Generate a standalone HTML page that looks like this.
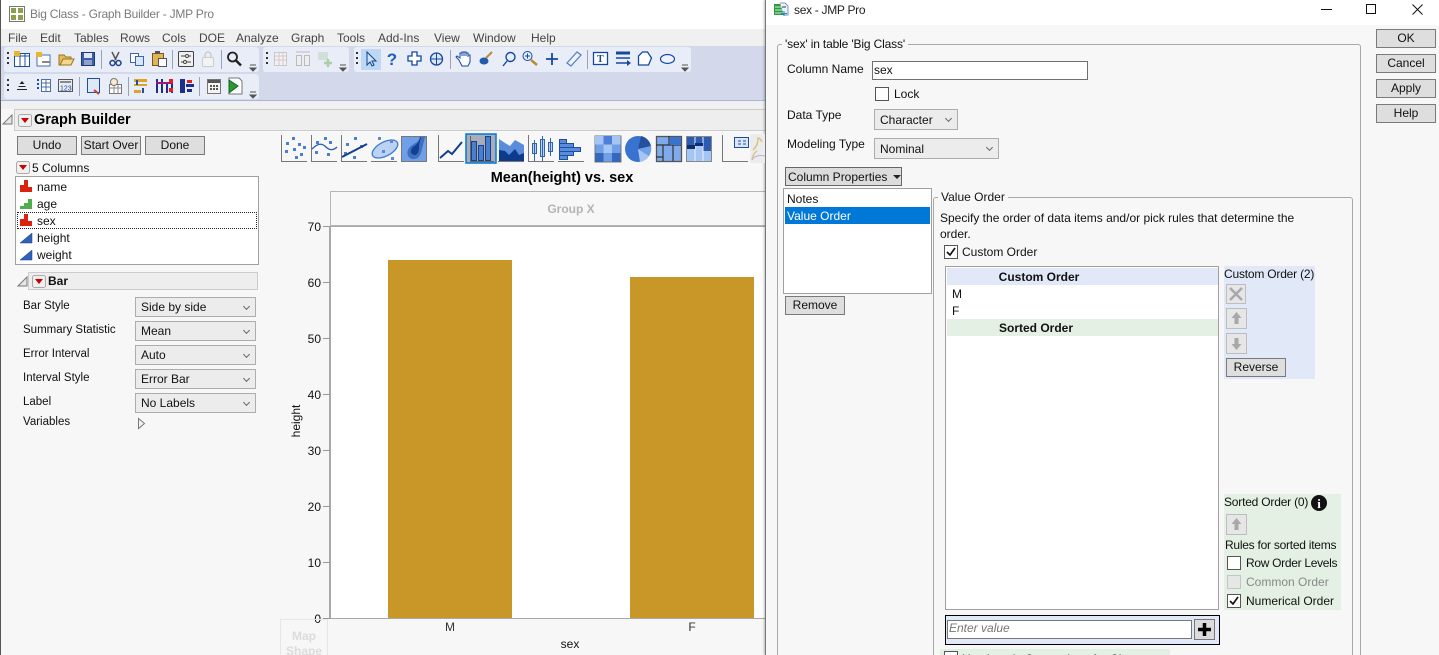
<!DOCTYPE html>
<html><head><meta charset="utf-8"><title>Big Class - Graph Builder - JMP Pro</title>
<style>
html,body{margin:0;padding:0;width:1439px;height:655px;overflow:hidden;background:#f7f7f7}
body{position:relative;font:12px "Liberation Sans",sans-serif;color:#111}
div{position:absolute;box-sizing:border-box}
.t{white-space:nowrap;line-height:16px;height:16px;transform:translateY(-8px)}
.c{transform:translate(-50%,-8px)}
.r{transform:translate(-100%,-8px)}
.b{font-weight:bold}
.btn{background:#dedede;border:1px solid #7a7a7a;text-align:center;line-height:17px;white-space:nowrap}
.dd{background:#ececec;border:1px solid #adadad;padding-left:5px;line-height:19px;white-space:nowrap}
.dd:after{content:"";position:absolute;right:6px;top:6px;width:4px;height:4px;border-right:1px solid #666;border-bottom:1px solid #666;transform:rotate(45deg)}
.cb{width:14px;height:14px;background:#fff;border:1px solid #555}
.ib{background:#e6e6e6;border:1px solid #bdbdbd}
svg{position:absolute;left:0;top:0}
</style></head><body>
<!-- main window -->
<div style="left:0;top:0;width:765px;height:29px;background:#fff"></div>
<div style="left:0;top:29px;width:765px;height:17px;background:#f0f0f0"></div>
<div style="left:0;top:46px;width:765px;height:55px;background:#d3d9eb;border-bottom:1px solid #a9b4d8"></div>
<div style="left:0;top:101px;width:765px;height:8px;background:#f0f0f0"></div>
<div style="left:0;top:0;width:1px;height:655px;background:#555"></div>
<div class="t" style="left:30px;top:14px;color:#7a7a7a;letter-spacing:-.23px">Big Class - Graph Builder - JMP Pro</div>
<div class="t" style="left:8px;top:38px;color:#444">File</div>
<div class="t" style="left:40px;top:38px;color:#444">Edit</div>
<div class="t" style="left:74px;top:38px;color:#444">Tables</div>
<div class="t" style="left:120px;top:38px;color:#444">Rows</div>
<div class="t" style="left:162px;top:38px;color:#444">Cols</div>
<div class="t" style="left:199px;top:38px;color:#444">DOE</div>
<div class="t" style="left:236px;top:38px;color:#444">Analyze</div>
<div class="t" style="left:291px;top:38px;color:#444">Graph</div>
<div class="t" style="left:337px;top:38px;color:#444">Tools</div>
<div class="t" style="left:378px;top:38px;color:#444">Add-Ins</div>
<div class="t" style="left:434px;top:38px;color:#444">View</div>
<div class="t" style="left:473px;top:38px;color:#444">Window</div>
<div class="t" style="left:531px;top:38px;color:#444">Help</div>
<div style="left:4px;top:47px;width:255px;height:25px;background:#e9edf8;border-radius:3px"></div>
<div style="left:263px;top:47px;width:86px;height:25px;background:#e9edf8;border-radius:3px"></div>
<div style="left:354px;top:47px;width:337px;height:25px;background:#e9edf8;border-radius:3px"></div>
<div style="left:4px;top:74px;width:255px;height:25px;background:#e9edf8;border-radius:3px"></div>
<div style="left:361px;top:49px;width:20px;height:21px;background:#bcd8f5"></div>

<!-- Graph builder panel -->
<div style="left:14px;top:109px;width:752px;height:22px;background:#eee;border:1px solid #ccc"></div>
<div class="t b" style="left:34px;top:120px;font-size:14.5px;color:#000">Graph Builder</div>
<div class="btn" style="left:17px;top:136px;width:60px;height:19px">Undo</div>
<div class="btn" style="left:81px;top:136px;width:60px;height:19px">Start Over</div>
<div class="btn" style="left:145px;top:136px;width:60px;height:19px">Done</div>
<div class="t" style="left:32px;top:168px">5 Columns</div>
<div style="left:15px;top:176px;width:244px;height:89px;background:#fff;border:1px solid #a0a0a0"></div>
<div style="left:17px;top:212px;width:240px;height:17px;border:1px dotted #222"></div>
<div class="t" style="left:37px;top:187px">name</div>
<div class="t" style="left:37px;top:204px">age</div>
<div class="t" style="left:37px;top:221px">sex</div>
<div class="t" style="left:37px;top:238px">height</div>
<div class="t" style="left:37px;top:255px">weight</div>

<div style="left:28px;top:272px;width:230px;height:18px;background:#eee;border:1px solid #ccc"></div>
<div class="t b" style="left:48px;top:281px">Bar</div>
<div class="t" style="left:23px;top:306px;font-size:11.5px">Bar Style</div>
<div class="t" style="left:23px;top:330px;font-size:11.5px">Summary Statistic</div>
<div class="t" style="left:23px;top:354px;font-size:11.5px">Error Interval</div>
<div class="t" style="left:23px;top:378px;font-size:11.5px">Interval Style</div>
<div class="t" style="left:23px;top:402px;font-size:11.5px">Label</div>
<div class="t" style="left:23px;top:422px;font-size:11.5px">Variables</div>
<div class="dd" style="left:135px;top:297px;width:121px;height:20px">Side by side</div>
<div class="dd" style="left:135px;top:321px;width:121px;height:20px">Mean</div>
<div class="dd" style="left:135px;top:345px;width:121px;height:20px">Auto</div>
<div class="dd" style="left:135px;top:369px;width:121px;height:20px">Error Bar</div>
<div class="dd" style="left:135px;top:393px;width:121px;height:20px">No Labels</div>

<!-- graph -->
<div style="left:722px;top:134px;width:43px;height:30px;background:#f7f7f7"></div>
<div class="t c b" style="left:562px;top:178px;font-size:14.5px;color:#000">Mean(height) vs. sex</div>
<div style="left:330px;top:191px;width:436px;height:35px;border:1px solid #b5b5b5;background:#f7f7f7"></div>
<div class="t c b" style="left:571px;top:209px;color:#b4b4b4">Group X</div>
<div style="left:330px;top:227px;width:435px;height:391px;background:#fff"></div>
<div style="left:388px;top:260px;width:124px;height:358px;background:#c89728"></div>
<div style="left:630px;top:277px;width:124px;height:341px;background:#c89728"></div>
<div style="left:329px;top:226px;width:2px;height:393px;background:#a8a8a8"></div>
<div style="left:329px;top:618px;width:436px;height:1px;background:#a8a8a8"></div>
<div style="left:330px;top:226px;width:435px;height:1px;background:#a8a8a8"></div>
<div class="t r" style="left:321px;top:227px">70</div>
<div class="t r" style="left:321px;top:283px">60</div>
<div class="t r" style="left:321px;top:339px">50</div>
<div class="t r" style="left:321px;top:395px">40</div>
<div class="t r" style="left:321px;top:451px">30</div>
<div class="t r" style="left:321px;top:507px">20</div>
<div class="t r" style="left:321px;top:563px">10</div>
<div class="t r" style="left:321px;top:619px">0</div>
<div class="t c" style="left:450px;top:627px;color:#333">M</div>
<div class="t c" style="left:692px;top:627px;color:#333">F</div>
<div class="t c" style="left:570px;top:644px">sex</div>
<div class="t" style="left:296px;top:421px;transform:translate(-50%,-50%) rotate(-90deg)">height</div>
<div style="left:280px;top:619px;width:48px;height:40px;border:1px solid #e6e6e6;border-bottom:0"></div>
<div class="t c b" style="left:304px;top:636px;color:#dcdcdc">Map</div>
<div class="t c b" style="left:304px;top:651px;color:#dcdcdc">Shape</div>

<!-- dialog -->
<div style="left:765px;top:0;width:674px;height:655px;background:#f7f7f7;border-left:1px solid #777;box-shadow:-1px 0 2px rgba(0,0,0,.25)"></div>
<div style="left:766px;top:0;width:673px;height:25px;background:#fff"></div>
<div class="t" style="left:794px;top:10px;color:#222;letter-spacing:-.3px">sex - JMP Pro</div>
<div style="left:777px;top:44px;width:584px;height:620px;border:1px solid #a8a8a8;border-radius:3px"></div>
<div class="t" style="left:782px;top:44px;background:#f7f7f7;padding:0 3px;letter-spacing:-.15px">'sex' in table 'Big Class'</div>
<div class="t" style="left:787px;top:69px">Column Name</div>
<div style="left:872px;top:61px;width:216px;height:19px;background:#fff;border:1px solid #707070;padding-left:1px;line-height:16px">sex</div>
<div class="cb" style="left:875px;top:87px;background:#fdfdfd"></div>
<div class="t" style="left:894px;top:94px">Lock</div>
<div class="t" style="left:787px;top:115px">Data Type</div>
<div class="dd" style="left:874px;top:109px;width:84px;height:21px;line-height:20px">Character</div>
<div class="t" style="left:787px;top:144px">Modeling Type</div>
<div class="dd" style="left:874px;top:138px;width:125px;height:21px;line-height:20px">Nominal</div>
<div class="btn" style="left:785px;top:167px;width:117px;height:19px;background:#dcdcdc;border-color:#666;text-align:left;padding-left:2px;line-height:18px">Column Properties</div>
<div style="left:783px;top:188px;width:149px;height:106px;background:#fff;border:1px solid #a0a0a0"></div>
<div style="left:785px;top:207px;width:145px;height:17px;background:#0078d7"></div>
<div class="t" style="left:787px;top:199px">Notes</div>
<div class="t" style="left:787px;top:216px;color:#fff">Value Order</div>
<div class="btn" style="left:785px;top:296px;width:60px;height:19px">Remove</div>

<div style="left:933px;top:197px;width:420px;height:470px;border:1px solid #a8a8a8;border-radius:3px"></div>
<div class="t" style="left:938px;top:197px;background:#f7f7f7;padding:0 3px">Value Order</div>
<div class="t" style="left:940px;top:218px">Specify the order of data items and/or pick rules that determine the</div>
<div class="t" style="left:940px;top:234px">order.</div>
<div class="cb" style="left:944px;top:245px"></div>
<div class="t" style="left:962px;top:252px">Custom Order</div>
<div style="left:945px;top:266px;width:274px;height:344px;background:#fff;border:1px solid #a0a0a0"></div>
<div style="left:947px;top:268px;width:271px;height:17px;background:#e1e8f8"></div>
<div style="left:947px;top:319px;width:271px;height:17px;background:#e3f0e3"></div>
<div class="t c b" style="left:1039px;top:277px">Custom Order</div>
<div class="t c b" style="left:1036px;top:328px">Sorted Order</div>
<div class="t" style="left:952px;top:294px">M</div>
<div class="t" style="left:952px;top:311px">F</div>
<div style="left:1224px;top:266px;width:91px;height:113px;background:#e1e8f8"></div>
<div class="t" style="left:1224px;top:274px;letter-spacing:-.2px">Custom Order (2)</div>
<div class="ib" style="left:1226px;top:284px;width:20px;height:20px"></div>
<div class="ib" style="left:1226px;top:308px;width:21px;height:21px"></div>
<div class="ib" style="left:1226px;top:333px;width:21px;height:21px"></div>
<div class="btn" style="left:1226px;top:358px;width:60px;height:19px">Reverse</div>
<div style="left:1224px;top:494px;width:117px;height:116px;background:#e3f0e3"></div>
<div class="t" style="left:1224px;top:502px;letter-spacing:-.2px">Sorted Order (0)</div>
<div class="ib" style="left:1226px;top:514px;width:21px;height:21px"></div>
<div class="t" style="left:1225px;top:545px;letter-spacing:-.25px">Rules for sorted items</div>
<div class="cb" style="left:1227px;top:556px"></div>
<div class="t" style="left:1246px;top:563px;letter-spacing:-.3px">Row Order Levels</div>
<div class="cb" style="left:1227px;top:575px;background:#e6e6e6;border-color:#c4c4c4"></div>
<div class="t" style="left:1246px;top:582px;color:#888">Common Order</div>
<div class="cb" style="left:1227px;top:594px"></div>
<div class="t" style="left:1246px;top:601px">Numerical Order</div>
<div style="left:945px;top:615px;width:275px;height:30px;background:#e1e8f8;border:1px solid #000"></div>
<div style="left:947px;top:620px;width:245px;height:19px;background:#fff;border:1px solid #777;font-style:italic;color:#777;line-height:15px;padding-left:1px">Enter value</div>
<div class="ib" style="left:1194px;top:619px;width:21px;height:21px;background:#dcdcdc;border-color:#777"></div>
<div style="left:940px;top:649px;width:230px;height:6px;background:#e3f0e3"></div>
<div class="cb" style="left:944px;top:651px"></div>
<div class="t" style="left:962px;top:659px">Use Levels Comparison for Charts</div>
<div class="btn" style="left:1376px;top:29px;width:60px;height:19px">OK</div>
<div class="btn" style="left:1376px;top:54px;width:60px;height:19px">Cancel</div>
<div class="btn" style="left:1376px;top:79px;width:60px;height:19px">Apply</div>
<div class="btn" style="left:1376px;top:104px;width:60px;height:19px">Help</div>

<svg width="1439" height="655" viewBox="0 0 1439 655" fill="none">
<!-- app icon -->
<rect x="9.5" y="6.5" width="15" height="15" stroke="#777" fill="#fff"/><rect x="11" y="8" width="5" height="5" fill="#8aa04a"/><rect x="18" y="8" width="5" height="5" fill="#8aa04a"/><rect x="11" y="15" width="5" height="5" fill="#8aa04a"/><rect x="18" y="15" width="5" height="5" fill="#8aa04a"/>
<!-- grips -->
<g fill="#333"><rect x="7" y="52" width="2" height="2"/><rect x="7" y="57" width="2" height="2"/><rect x="7" y="62" width="2" height="2"/><rect x="266" y="52" width="2" height="2"/><rect x="266" y="57" width="2" height="2"/><rect x="266" y="62" width="2" height="2"/><rect x="356" y="52" width="2" height="2"/><rect x="356" y="57" width="2" height="2"/><rect x="356" y="62" width="2" height="2"/><rect x="7" y="79" width="2" height="2"/><rect x="7" y="84" width="2" height="2"/><rect x="7" y="89" width="2" height="2"/></g>
<!-- overflow arrows -->
<g fill="#555"><path d="M250 65h6M250 68l3 3 3-3z" stroke="#555"/><path d="M340 65h6M340 68l3 3 3-3z" stroke="#555"/><path d="M682 65h6M682 68l3 3 3-3z" stroke="#555"/><path d="M250 92h6M250 95l3 3 3-3z" stroke="#555"/></g>
<!-- separators -->
<g stroke="#9aa3b5"><path d="M101.500 50v19M172.500 50v19M221.500 50v19M450.500 50v19M587.500 50v19M79.500 77v19M128.500 77v19M199.500 77v19"/></g>
<!-- toolbar row 1 -->
<rect x="14.500" y="53.500" width="15" height="13" fill="#fff" stroke="#1c4f9e"/><path d="M15 56h14M20 54v12M25 54v12" stroke="#1c4f9e"/><rect x="14" y="51" width="6" height="5" fill="#e8b52e"/>
<rect x="37" y="55" width="13" height="11" fill="#fff" stroke="#4a6ea8"/><rect x="36" y="52" width="6" height="5" fill="#e8b52e"/><path d="M42 62h8" stroke="#888" stroke-width="2"/>
<path d="M59 65V55h5l2 2h5v8z" fill="#e6bb5c" stroke="#9a7420"/><path d="M60 65l3-6h11l-3 6z" fill="#f3d78f" stroke="#9a7420"/>
<rect x="81.500" y="52.500" width="13" height="13" fill="#3e5fa6" stroke="#1f3a75"/><rect x="84" y="53" width="8" height="5" fill="#dfe6f5"/><rect x="84" y="60" width="8" height="5" fill="#8da0c9"/>
<path d="M112 52l4 8M119 52l-4 8" stroke="#555" stroke-width="1.500"/><circle cx="112.500" cy="63" r="2.500" stroke="#1c3f8f" stroke-width="1.500"/><circle cx="118.500" cy="63" r="2.500" stroke="#1c3f8f" stroke-width="1.500"/>
<rect x="130.500" y="53.500" width="8" height="9" fill="#fff" stroke="#3b65ad"/><rect x="135.500" y="56.500" width="8" height="9" fill="#dbe6f8" stroke="#3b65ad"/>
<rect x="152.500" y="53.500" width="11" height="12" fill="#e0b457" stroke="#7b5a16"/><rect x="155" y="51" width="5" height="3" fill="#555"/><rect x="158.500" y="58.500" width="8" height="8" fill="#fff" stroke="#555"/>
<rect x="178.500" y="51.500" width="15" height="15" fill="#f0f0f0" stroke="#444" rx="1"/><path d="M181 56h10M181 62h10" stroke="#444"/><circle cx="187" cy="56" r="1.500" fill="#fff" stroke="#444"/><circle cx="185" cy="62" r="1.500" fill="#fff" stroke="#444"/>
<rect x="202.500" y="57.500" width="11" height="9" rx="1" stroke="#ccc" fill="#f3f3f3"/><path d="M205 57v-2a3 3 0 0 1 6 0v2" stroke="#ccc" stroke-width="1.500"/>
<circle cx="232.500" cy="57" r="4.500" stroke="#222" stroke-width="1.800"/><path d="M236 60.500l5 5" stroke="#222" stroke-width="2.500"/>
<!-- disabled -->
<rect x="274.500" y="52.500" width="12" height="13" stroke="#c8c8c8" fill="#f2f2f2"/><path d="M275 56h11M275 60h11M279 53v12M283 53v12" stroke="#d8c8c8"/>
<rect x="296.500" y="55.500" width="5" height="10" stroke="#bbb" fill="#eee"/><rect x="304.500" y="55.500" width="5" height="10" stroke="#bbb" fill="#eee"/><path d="M296 52h14" stroke="#bbb"/>
<rect x="318" y="52" width="10" height="8" fill="#cfe0d8"/><path d="M328 59v8M324 63h8" stroke="#a8cfa8" stroke-width="2.500"/>
<!-- tool icons -->
<path d="M367 52v13l3-3 2 4 2-1-2-4h4z" fill="#cfe3fa" stroke="#123f8f"/>
<text x="392" y="65" text-anchor="middle" font-family="Liberation Sans" font-weight="bold" font-size="17" fill="#1c5fbf">?</text>
<path d="M412 52h5v4h4v5h-4v4h-5v-4h-4v-5h4z" stroke="#13489f" stroke-width="1.300" fill="#fff"/>
<circle cx="436.500" cy="59" r="6" stroke="#13489f" stroke-width="1.300" fill="#dbe6f8"/><path d="M431 59h11M436.500 53.500v11" stroke="#13489f"/>
<path d="M459 60l-3-3 1-1 3 2v-5h2v3-4h2v4-4h2v4-3h2v4-2h2v7l-2 4h-6z" fill="#fff" stroke="#13489f"/>
<ellipse cx="484" cy="61" rx="4.500" ry="3.500" fill="#1f5cae"/><path d="M486 58l6-6" stroke="#b78a3a" stroke-width="2"/>
<circle cx="510.500" cy="57" r="4.500" stroke="#13489f" stroke-width="1.400"/><path d="M507 61l-4 5" stroke="#13489f" stroke-width="1.400"/>
<circle cx="527.500" cy="56" r="4.500" stroke="#13489f" fill="#e8eef9"/><path d="M525 56h5M527.500 53.500v5" stroke="#13489f"/><path d="M531 60l6 5" stroke="#b78a3a" stroke-width="2.500"/>
<path d="M552 53v12M546 59h12" stroke="#13489f" stroke-width="1.800"/>
<path d="M567 63l10-11 4 3-10 11z" stroke="#5a82c4" stroke-width="1.300" fill="#eef2fa"/>
<rect x="593.500" y="52.500" width="14" height="12" stroke="#13489f" fill="#fff" stroke-width="1.300"/><text x="597" y="62" font-family="Liberation Serif" font-weight="bold" font-size="10" fill="#13489f">T</text>
<path d="M616 53h14" stroke="#13489f" stroke-width="3"/><path d="M616 58h14M616 63h13" stroke="#13489f" stroke-width="1.500"/><path d="M627 60l4 3-4 3z" fill="#13489f"/>
<path d="M638.500 65v-9l4-4h5l4 6-3 7z" stroke="#13489f" stroke-width="1.300" fill="#fff"/>
<ellipse cx="667.500" cy="59" rx="7" ry="4.500" stroke="#13489f" stroke-width="1.200" fill="#eef2fa"/>
<!-- toolbar row 2 -->
<path d="M22 81l2.500 3h-5z" fill="#222"/><path d="M18.500 86.500h7M17 89.500h10" stroke="#222"/>
<rect x="41.500" y="79.500" width="9" height="12" stroke="#4b6fa8" fill="#fff"/><path d="M42 83h9M42 87h9M46 80v12" stroke="#4b6fa8"/><path d="M37 80h2M37 84h2M37 88h2" stroke="#1c4f9e" stroke-width="2"/>
<rect x="58.500" y="79.500" width="14" height="12" stroke="#555" fill="#e8ecf4"/><path d="M60 82h11" stroke="#888" stroke-width="2"/><text x="60" y="90.500" font-size="7" font-family="Liberation Sans" fill="#123f8f">123</text>
<rect x="87.500" y="78.500" width="12" height="14" stroke="#1c4f9e" fill="#dfe8f7"/><path d="M94 90l5 4" stroke="#c8402a" stroke-width="2"/>
<rect x="109.500" y="84.500" width="12" height="9" stroke="#777" fill="#fff"/><path d="M110 88h12M114 85v9M118 85v9" stroke="#888"/><circle cx="114" cy="82" r="3.500" stroke="#777" fill="#fbe8d0"/>
<path d="M134 79h13v3h-13zM134 84h13v2h-13z" fill="#d9a52e"/><path d="M134 90h7v3h-7z" fill="#d9a52e"/><path d="M137 80v5M143 88v5" stroke="#1c4f9e" stroke-width="2"/>
<path d="M157 79v14M162 79v14M167 84v9M172 79v14" stroke="#1c2f8f" stroke-width="2"/><path d="M156 83h17" stroke="#a0187a" stroke-width="2"/><rect x="169" y="79" width="4" height="4" fill="#d22"/><rect x="169" y="88" width="4" height="4" fill="#d22"/>
<path d="M180 79h5v14h-5zM186 84h8v3h-8z" fill="#1c2f8f"/><rect x="187" y="80" width="5" height="3" fill="#d22"/><rect x="187" y="89" width="5" height="3" fill="#1c2f8f"/>
<rect x="207.500" y="79.500" width="13" height="14" stroke="#777" fill="#f3f3f3"/><rect x="208" y="80" width="12" height="3" fill="#555"/><path d="M210 86h9M210 89h9" stroke="#555" stroke-dasharray="2 1" stroke-width="2"/>
<path d="M229 78h10l3 3v13h-13z" stroke="#777" fill="#fff"/><path d="M229 80l9 6-9 7z" fill="#2a9a35" stroke="#17651f"/>
<!-- disclosure triangles and red buttons -->
<path d="M12 115v9H3z" fill="#e6e6e6" stroke="#777"/><rect x="18.500" y="114.500" width="13" height="12" rx="2" fill="#f0f0f0" stroke="#aaa"/><path d="M21 118h8l-4 5z" fill="#cc0000"/>
<rect x="16.500" y="161.500" width="13" height="12" rx="2" fill="#f0f0f0" stroke="#aaa"/><path d="M19 165h8l-4 5z" fill="#cc0000"/>
<path d="M27 277v9h-9z" fill="#e6e6e6" stroke="#777"/><rect x="32.500" y="275.500" width="13" height="12" rx="2" fill="#f0f0f0" stroke="#aaa"/><path d="M35 279h8l-4 5z" fill="#cc0000"/>
<path d="M138.500 418.500l6 5-6 5z" fill="#f3f3f3" stroke="#777"/>
<!-- column icons -->
<g fill="#d9230f"><rect x="20" y="185" width="4" height="7"/><rect x="24" y="180" width="4" height="12"/><rect x="28" y="187" width="4" height="5"/><rect x="20" y="219" width="4" height="7"/><rect x="24" y="214" width="4" height="12"/><rect x="28" y="221" width="4" height="5"/></g>
<g fill="#52ad4c"><rect x="20" y="206" width="4" height="3"/><rect x="24" y="203" width="4" height="6"/><rect x="28" y="199" width="4" height="10"/></g>
<path d="M20 243l12-10v10zM20 260l12-10v10z" fill="#2f62b8" stroke="#1c3f85" stroke-width=".5"/>
<!-- graph type icons -->
<g stroke="#777"><path d="M281 161.500h26M311 161.500h26M341 161.500h26M371 161.500h26M438 161.500h26M498 161.500h26M528 161.500h26M558 161.500h26M722 161.500h26"/><path d="M281.500 135v27M311.500 135v27M341.500 135v27M438.500 135v27M528.500 135v27M722.500 135v27"/></g>
<g fill="#4a7fd0"><rect x="292" y="137" width="3" height="3"/><rect x="286" y="142" width="3" height="3"/><rect x="298" y="143" width="3" height="3"/><rect x="303" y="146" width="3" height="3"/><rect x="285" y="150" width="3" height="3"/><rect x="293" y="148" width="3" height="3"/><rect x="300" y="153" width="3" height="3"/><rect x="295" y="156" width="3" height="3"/>
<rect x="324" y="137" width="3" height="3"/><rect x="316" y="141" width="3" height="3"/><rect x="329" y="141" width="3" height="3"/><rect x="315" y="151" width="3" height="3"/><rect x="327" y="153" width="3" height="3"/><rect x="354" y="137" width="3" height="3"/><rect x="346" y="143" width="3" height="3"/><rect x="360" y="145" width="3" height="3"/><rect x="344" y="152" width="3" height="3"/><rect x="353" y="156" width="3" height="3"/></g>
<path d="M312 149c6-6 10-6 14-2s8 3 11 0" stroke="#2a5fae" stroke-width="1.300"/>
<path d="M342 157l25-13" stroke="#123f8f" stroke-width="2"/>
<ellipse cx="385" cy="149" rx="14" ry="7" transform="rotate(-28 385 149)" fill="#bcd2f2" stroke="#3d7ad0" stroke-width="1.300"/><g fill="#5b8ad6"><rect x="378" y="137" width="3" height="3"/><rect x="390" y="140" width="3" height="3"/><rect x="382" y="150" width="3" height="3"/><rect x="391" y="157" width="3" height="3"/></g>
<rect x="401.500" y="136.500" width="25" height="25" fill="#6f9fe6" stroke="#777"/><path d="M420 137c-1 5-5 6-9 9-5 4-5 11 1 13 7 1 9-5 10-10 1-4 2-8 3-12z" fill="#3f6fc0"/><path d="M420 137c-1 6-4 8-7 10-3 3-3 7 1 8 4 0 5-4 5-8 0-3 1-6 2-10z" fill="#123f8f"/>
<rect x="466" y="134" width="30" height="29" fill="#a9adb8" stroke="#0078d7" stroke-width="1.500"/>
<path d="M470 161.500h24M470.500 136v25" stroke="#666"/><g fill="#4a7fd0" stroke="#1c3f85"><rect x="471.500" y="141.500" width="5" height="19"/><rect x="478.500" y="145.500" width="5" height="15"/><rect x="485.500" y="136.500" width="5" height="24"/></g>
<path d="M440 158l8-7 4 3 10-12" stroke="#123f8f" stroke-width="2"/>
<path d="M499 139l6 4 5 3 5-6 9 5v16h-25z" fill="#5a8cdc"/><path d="M499 150l6 1 4 4 6-6 4 6 5-2v8h-25z" fill="#0e3a8c"/>
<g stroke="#2d62b5" fill="#bcd2f2"><rect x="532.500" y="143.500" width="4" height="10"/><rect x="540.500" y="139.500" width="4" height="17"/><rect x="548.500" y="142.500" width="4" height="9"/><path d="M534.500 140v21M542.500 136v25M550.500 138v18" fill="none"/></g>
<g fill="#5a8cdc" stroke="#1c4f9e"><rect x="559.500" y="139.500" width="7" height="4"/><rect x="559.500" y="143.500" width="14" height="4"/><rect x="559.500" y="147.500" width="21" height="4"/><rect x="559.500" y="151.500" width="14" height="4"/><rect x="559.500" y="155.500" width="8" height="4"/></g>
<g><rect x="595" y="136" width="26" height="26" fill="#6f9fe6" stroke="#777"/><rect x="595" y="136" width="8.500" height="8.500" fill="#a5c6f5"/><rect x="603.500" y="144.500" width="8.500" height="8.500" fill="#a5c6f5"/><rect x="612" y="136" width="8.500" height="8.500" fill="#a5c6f5"/><rect x="595" y="153" width="8.500" height="9" fill="#3568bb"/><rect x="612" y="153" width="8.500" height="9" fill="#3568bb"/><rect x="603.500" y="136" width="8.500" height="8.500" fill="#4c80d6"/></g>
<circle cx="638" cy="149" r="13" fill="#3a72d0"/><path d="M638 149l3-13a13 13 0 0 1 10 10z" fill="#27509c"/><path d="M638 149l13-3a13 13 0 0 1-2 10z" fill="#6f9fe6"/><path d="M638 149l11 7a13 13 0 0 1-9 6z" fill="#a5c6f5"/>
<rect x="656.500" y="136.500" width="25" height="25" fill="#7fabec" stroke="#555" stroke-width="1.300"/><path d="M669 136v9M656 145h25M663 145v16M673 145v16M656 157h7" stroke="#333" stroke-width="1.200"/><rect x="670" y="137" width="11" height="8" fill="#3a72d0"/>
<rect x="686.500" y="136.500" width="25" height="25" fill="#a5c6f5" stroke="#888"/><rect x="687" y="137" width="8" height="12" fill="#2c5cb0"/><rect x="695" y="137" width="8" height="8" fill="#2c5cb0"/><rect x="703" y="137" width="8" height="14" fill="#2c5cb0"/><path d="M695 137v24M703 137v24" stroke="#eef" /><rect x="687" y="145" width="8" height="4" fill="#0e2e70"/><rect x="695" y="143" width="8" height="3" fill="#0e2e70"/>
<rect x="734.500" y="137.500" width="14" height="10" fill="#dbe6f8" stroke="#1c4f9e"/><path d="M738 141h3M738 144h3M743 141h3M743 144h3" stroke="#1c4f9e"/>
<rect x="750" y="134" width="15" height="29" fill="#ececec"/><path d="M752 160c1-6 3-8 5-9M753 150c3-3 5-6 5-12 2 0 3 2 4 4" stroke="#d8c48a" stroke-width="1.500"/><path d="M752 160c3-5 8-5 13-4" stroke="#b5b5cf"/>
<!-- axis ticks -->
<path d="M323 226.500h7M323 282.500h7M323 338.500h7M323 394.500h7M323 450.500h7M323 506.500h7M323 562.500h7M323 618.500h7" stroke="#999"/>
<!-- dialog icon -->
<rect x="774" y="4" width="11" height="11" fill="#2a9a45"/><path d="M775 7h9M775 10h9M775 13h9" stroke="#d8f0d8"/><path d="M780 3h5l3 3v9h-4" stroke="#7c93b8" fill="#eef3fb"/><path d="M782 7h4" stroke="#333"/><path d="M784 11v5M781 13.500h6" stroke="#2384d8"/>
<!-- window controls -->
<path d="M1321 9.500h11" stroke="#111"/><rect x="1366.500" y="4.500" width="9" height="9" stroke="#111"/><path d="M1412.500 4.500l10 10M1422.500 4.500l-10 10" stroke="#111"/>
<!-- dropdown button arrow -->
<path d="M893 175h8l-4 4z" fill="#222"/>
<!-- checks -->
<path d="M947 252l3 3 5-7" stroke="#111" stroke-width="1.700"/><path d="M1230 601l3 3 5-7" stroke="#111" stroke-width="1.700"/>
<!-- side button icons -->
<path d="M1230 288l12 12M1242 288l-12 12" stroke="#a8a8a8" stroke-width="2.500"/>
<path d="M1236.500 312l5 6h-3v6h-4v-6h-3z" fill="#a8a8a8"/><path d="M1236.500 350l5-6h-3v-6h-4v6h-3z" fill="#a8a8a8"/><path d="M1236.500 518l5 6h-3v6h-4v-6h-3z" fill="#a8a8a8"/>
<!-- info -->
<circle cx="1319" cy="503" r="8" fill="#111"/><text x="1319" y="508" text-anchor="middle" font-family="Liberation Serif" font-weight="bold" font-size="13" fill="#fff">i</text>
<!-- plus -->
<path d="M1204.500 623v13M1198 629.500h13" stroke="#000" stroke-width="3.500"/>
</svg>
</body></html>
